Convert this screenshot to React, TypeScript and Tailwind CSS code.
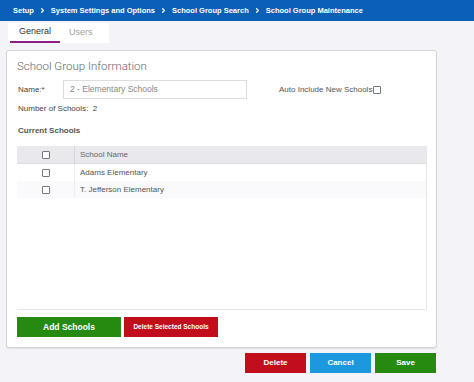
import { ChevronRight } from 'lucide-react';

const crumbs = ['Setup', 'System Settings and Options', 'School Group Search', 'School Group Maintenance'];
const schools = ['Adams Elementary', 'T. Jefferson Elementary'];

function Box() {
  return <span className="inline-block w-[8px] h-[8px] border border-[#777] rounded-[1px] bg-white" />;
}

export default function App() {
  return (
    <div className="w-[474px] h-[382px] bg-[#f3f3f8] text-[#444] overflow-hidden" style={{ fontFamily: '"Liberation Sans", Arial, sans-serif' }}>
      {/* Breadcrumb bar */}
      <div className="h-[21px] bg-[#0a60b6] flex items-center pl-[13px] text-white text-[7.5px] font-bold gap-[5px] leading-none">
        {crumbs.map((c, i) => (
          <div key={c} className="flex items-center gap-[5px]">
            {i > 0 && <ChevronRight size={7} strokeWidth={4.5} />}
            <span>{c}</span>
          </div>
        ))}
      </div>

      {/* Tabs */}
      <div className="pl-[8px] pt-[2px] flex">
        <div className="flex bg-white h-[20px] items-stretch pr-[7px]">
          <div className="px-[9px] flex items-center text-[9px] text-[#333] border-b-2 border-[#8b1e87] ml-[2px]">General</div>
          <div className="px-[9px] flex items-center text-[9px] text-[#a0a0a0]">Users</div>
        </div>
      </div>

      {/* Card */}
      <div className="mx-[6px] mt-[7px] w-[431px] h-[298px] bg-white border border-[#d4d4d8] rounded-[3px] shadow-[0_1px_1px_rgba(0,0,0,0.08)] px-[10px] pt-[7px] flex flex-col">
        <div className="text-[11.5px] leading-[16px] text-[#666] font-light" style={{ fontFamily: 'Roboto, sans-serif' }}>School Group Information</div>

        <div className="flex items-center mt-[6px] text-[8px]">
          <span className="w-[46px] pl-[1px]">Name:*</span>
          <div className="w-[184px] h-[19px] border border-[#ddd] flex items-center pl-[6px] text-[#888] text-[8.5px]">2 - Elementary Schools</div>
          <span className="ml-[32px] flex items-center gap-[1px] text-[#555]">Auto Include New Schools<Box /></span>
        </div>

        <div className="mt-[5px] pl-[1px] text-[8px] leading-[10px]">Number of Schools:&nbsp; 2</div>
        <div className="mt-[12px] pl-[1px] text-[8px] leading-[10px] font-bold text-[#555]">Current Schools</div>

        {/* Table */}
        <div className="mt-[10px] w-[410px] h-[164px] border-r border-b border-[#e8e8ec]">
          <div className="flex h-[18px] bg-[#e9e9ed] border-b border-[#dcdce0] text-[8px] text-[#666]">
            <div className="w-[58px] flex items-center justify-center border-r border-[#d6d6da]"><Box /></div>
            <div className="flex items-center pl-[5px]">School Name</div>
          </div>
          {schools.map((s, i) => (
            <div key={s} className={`flex h-[17px] text-[8px] text-[#555] ${i === 1 ? 'bg-[#fafafd]' : 'bg-white'}`}>
              <div className="w-[58px] flex items-center justify-center border-r border-[#eee]"><Box /></div>
              <div className="flex items-center pl-[5px]">{s}</div>
            </div>
          ))}
        </div>

        <div className="flex gap-[3px] mt-[7px] text-white">
          <button className="w-[104px] h-[20px] bg-[#268a10] text-[8.5px] font-bold">Add Schools</button>
          <button className="w-[94px] h-[20px] bg-[#c20d1c] text-[6.5px] font-bold whitespace-nowrap">Delete Selected Schools</button>
        </div>
      </div>

      {/* Footer buttons */}
      <div className="flex justify-end gap-[4px] w-[436px] mt-[5px] text-white text-[8px] font-bold">
        <button className="w-[61px] h-[20px] bg-[#c20d1c]">Delete</button>
        <button className="w-[61px] h-[20px] bg-[#1b98de]">Cancel</button>
        <button className="w-[61px] h-[20px] bg-[#268a10]">Save</button>
      </div>
    </div>
  );
}
